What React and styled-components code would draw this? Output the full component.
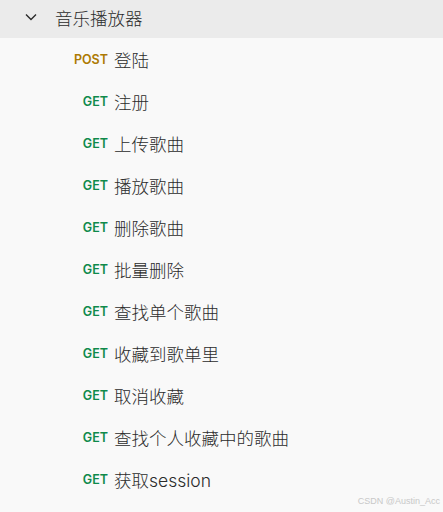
import React from 'react';
import styled, { createGlobalStyle } from 'styled-components';

const GlobalStyle = createGlobalStyle`
  html, body {
    margin: 0;
    padding: 0;
    background: #f9f9f9;
  }
  body {
    font-family: Inter, "Noto Sans CJK SC", sans-serif;
  }
`;

const StyledPanel = styled.div`
  position: relative;
  width: 443px;
  height: 512px;
  background: #f9f9f9;
  overflow: hidden;
`;
const StyledFolder = styled.div`
  display: flex;
  align-items: center;
  height: 38px;
  padding-bottom: 4px;
  box-sizing: border-box;
  background: #ebebeb;
  color: #2b2b2b;
`;
const StyledChevron = styled.span`
  display: inline-flex;
  width: 14px;
  height: 14px;
  margin-left: 24px;
  margin-right: 17px;
`;
const StyledFolderName = styled.span`
  font-family: "Noto Sans CJK SC", sans-serif;
  font-size: 17.5px;
  font-weight: 300;
`;
const StyledRequest = styled.div`
  display: flex;
  align-items: center;
  height: 42px;
`;
const StyledMethod = styled.span`
  width: 114px;
  padding-right: 6px;
  box-sizing: border-box;
  text-align: right;
  font-family: Inter, sans-serif;
  font-size: 12.5px;
  font-weight: 600;
  color: ${(props) => (props.method === 'POST' ? '#ad7a03' : '#0f8a4b')};
`;
const StyledName = styled.span`
  font-family: Inter, "Noto Sans CJK SC", sans-serif;
  font-size: 17.5px;
  font-weight: 300;
  color: #2b2b2b;
`;
const StyledWatermark = styled.div`
  position: absolute;
  right: 3px;
  bottom: 6px;
  font-family: "Liberation Sans", sans-serif;
  font-size: 9px;
  color: #c8c8c8;
`;

const requests = [
  { method: 'POST', name: '登陆' },
  { method: 'GET', name: '注册' },
  { method: 'GET', name: '上传歌曲' },
  { method: 'GET', name: '播放歌曲' },
  { method: 'GET', name: '删除歌曲' },
  { method: 'GET', name: '批量删除' },
  { method: 'GET', name: '查找单个歌曲' },
  { method: 'GET', name: '收藏到歌单里' },
  { method: 'GET', name: '取消收藏' },
  { method: 'GET', name: '查找个人收藏中的歌曲' },
  { method: 'GET', name: '获取session' },
];

export default function App() {
  return (
    <StyledPanel>
      <GlobalStyle />
      <StyledFolder>
        <StyledChevron>
          <svg width="14" height="14" viewBox="0 0 14 14" fill="none">
            <path d="M2 4.5 L7 9.5 L12 4.5" stroke="#2b2b2b" strokeWidth="1.4" />
          </svg>
        </StyledChevron>
        <StyledFolderName>音乐播放器</StyledFolderName>
      </StyledFolder>
      {requests.map((req) => (
        <StyledRequest key={req.name}>
          <StyledMethod method={req.method}>{req.method}</StyledMethod>
          <StyledName>{req.name}</StyledName>
        </StyledRequest>
      ))}
      <StyledWatermark>CSDN @Austin_Acc</StyledWatermark>
    </StyledPanel>
  );
}
